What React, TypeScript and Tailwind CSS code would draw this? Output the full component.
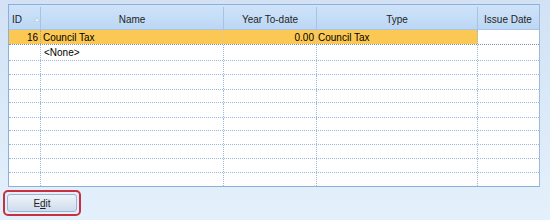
import React from "react";

const cols = [
  { key: "id", label: "ID", w: "w-[32px]" },
  { key: "name", label: "Name", w: "w-[183px]" },
  { key: "ytd", label: "Year To-date", w: "w-[93px]" },
  { key: "type", label: "Type", w: "w-[161px]" },
  { key: "issue", label: "Issue Date", w: "w-[60px]" },
];

const emptyRows = [16, 16, 15, 16, 15, 15, 16, 15, 15];

export default function App() {
  return (
    <div className="w-[550px] h-[220px] bg-gradient-to-b from-[#d2e2f4] to-[#e4f1fc] pt-[4px] pl-[8px] font-['Liberation_Sans',sans-serif] text-[10px] text-black overflow-hidden">
      {/* Grid */}
      <div className="w-[532px] h-[183px] border border-[#8eafdc] border-r-[#9ab8e0] bg-white flex flex-col overflow-hidden">
        {/* Header */}
        <div className="flex h-[28px] bg-gradient-to-b from-[#cfe3f9] to-[#bcd7f4] border-b border-[#a9c4e6]">
          {cols.map((c, i) => (
            <div
              key={c.key}
              className={`${c.w} shrink-0 flex items-center pt-[3px] ${i === 0 ? "justify-start pl-[3px]" : "justify-center"} ${i < cols.length - 1 ? "border-r border-[#a7c2e4]" : ""} mt-[2px]`}
            >
              <span className="text-[#1e1e1e]">{c.label}</span>
              {i === 0 && (
                <svg width="7" height="5" viewBox="0 0 7 5" className="ml-[12px]">
                  <path d="M3.5 0 L7 5 L0 5 Z" fill="#e8f1fb" stroke="#9fb9db" strokeWidth="0.6" />
                </svg>
              )}
            </div>
          ))}
        </div>

        {/* Selected row */}
        <div className="flex h-[15px] border-b border-dotted border-[#7f8fa8]">
          <div className="w-[32px] shrink-0 bg-[#fbc853] text-right pr-[2px] leading-[15px] border-r border-dotted border-[#a6a48a]">16</div>
          <div className="w-[183px] shrink-0 bg-[#fbc853] pl-[2px] leading-[15px] border-r border-dotted border-[#d8c8a0]">Council Tax</div>
          <div className="w-[93px] shrink-0 bg-[#fbc853] text-right pr-[2px] leading-[15px] border-r border-dotted border-[#d8c8a0]">0.00</div>
          <div className="w-[161px] shrink-0 bg-[#fbc853] pl-[1px] leading-[15px] border-r border-dotted border-[#9ab7df]">Council Tax</div>
          <div className="w-[60px] shrink-0 bg-white"></div>
        </div>

        {/* None row */}
        <div className="flex h-[16px] border-b border-dotted border-[#9ab7df]">
          <div className="w-[32px] shrink-0 border-r border-dotted border-[#9ab7df]"></div>
          <div className="w-[183px] shrink-0 pl-[3px] leading-[15px] border-r border-dotted border-[#9ab7df]">&lt;None&gt;</div>
          <div className="w-[93px] shrink-0 border-r border-dotted border-[#9ab7df]"></div>
          <div className="w-[161px] shrink-0 border-r border-dotted border-[#9ab7df]"></div>
          <div className="w-[60px] shrink-0"></div>
        </div>

        {emptyRows.map((h, r) => (
          <div
            key={r}
            className={`flex ${h === 16 ? "h-[16px]" : "h-[15px]"} ${r < emptyRows.length - 1 ? "border-b border-dotted border-[#9ab7df]" : ""}`}
          >
            <div className="w-[32px] shrink-0 border-r border-dotted border-[#9ab7df]"></div>
            <div className="w-[183px] shrink-0 border-r border-dotted border-[#9ab7df]"></div>
            <div className="w-[93px] shrink-0 border-r border-dotted border-[#9ab7df]"></div>
            <div className="w-[161px] shrink-0 border-r border-dotted border-[#9ab7df]"></div>
            <div className="w-[60px] shrink-0"></div>
          </div>
        ))}
      </div>

      {/* Edit button */}
      <div className="mt-[3px] -ml-[5px] w-[78px] h-[26px] rounded-[5px] border-2 border-[#c9303f] p-[2px]">
        <button className="w-full h-full rounded-[3px] border border-[#9db4d2] bg-gradient-to-b from-[#eef3fa] via-[#dfe8f4] to-[#cfdcec] text-[10px] text-[#1e1e1e] flex items-center justify-center">
          <span>
            E<span className="underline">d</span>it
          </span>
        </button>
      </div>
    </div>
  );
}
